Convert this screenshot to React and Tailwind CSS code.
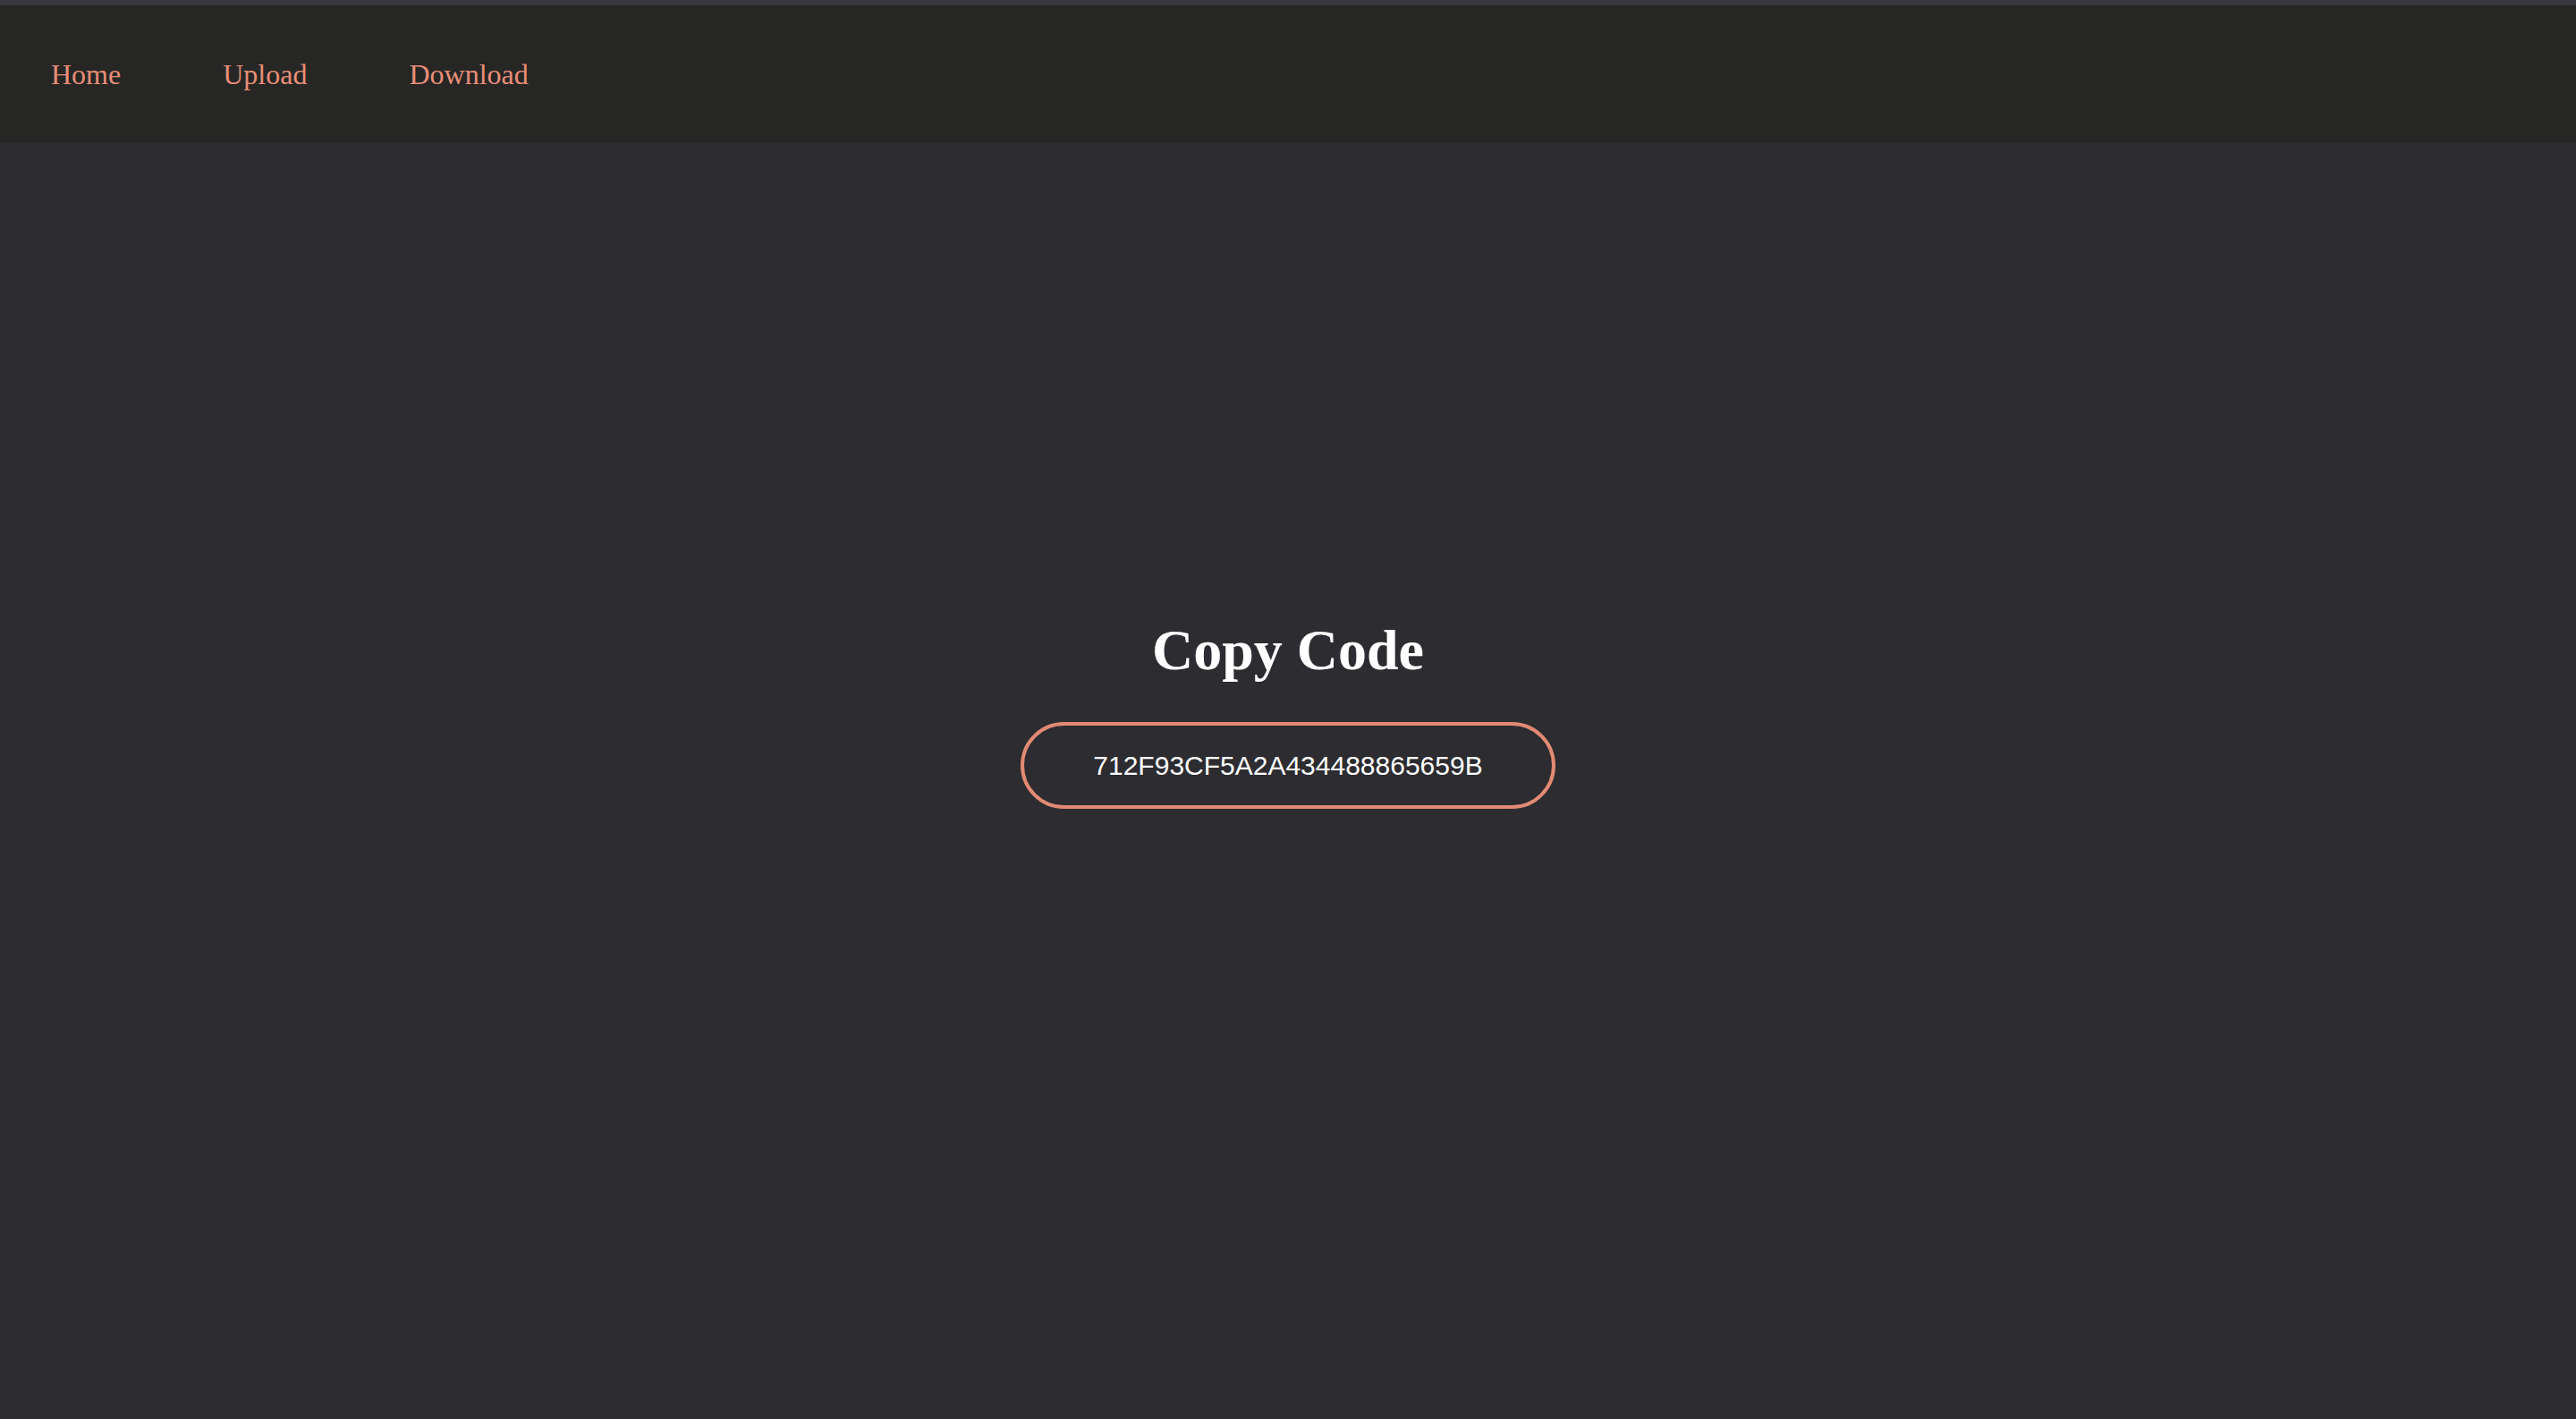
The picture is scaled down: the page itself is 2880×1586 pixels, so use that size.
import React from 'react';

const links = ['Home', 'Upload', 'Download'];

const App = () => {
  const code = '712F93CF5A2A434488865659B';

  return (
    <div className="min-h-screen flex flex-col bg-[#2c2c31]">
      <div className="h-[6px] bg-[#37383c]" />

      {/* --- Top nav --- */}
      <nav className="h-[154px] bg-[#262624] flex items-center">
        {links.map(label => (
          <a
            key={label}
            href="#"
            className="px-[57px] text-[32px] leading-none text-[#e88e78] font-['Liberation_Serif',serif]"
          >
            {label}
          </a>
        ))}
      </nav>

      {/* --- Code panel --- */}
      <main className="flex-1 flex flex-col items-center pt-[535px]">
        <h1 className="text-[64px] leading-none font-bold text-white font-['Liberation_Serif',serif]">
          Copy Code
        </h1>
        <button
          type="button"
          onClick={() => navigator.clipboard?.writeText(code)}
          className="mt-[48px] w-[598px] h-[97px] rounded-full border-[4px] border-[#e28a74] flex items-center justify-center text-[30px] text-white font-['Liberation_Sans',Arial,sans-serif]"
        >
          {code}
        </button>
      </main>
    </div>
  );
};

export default App;
